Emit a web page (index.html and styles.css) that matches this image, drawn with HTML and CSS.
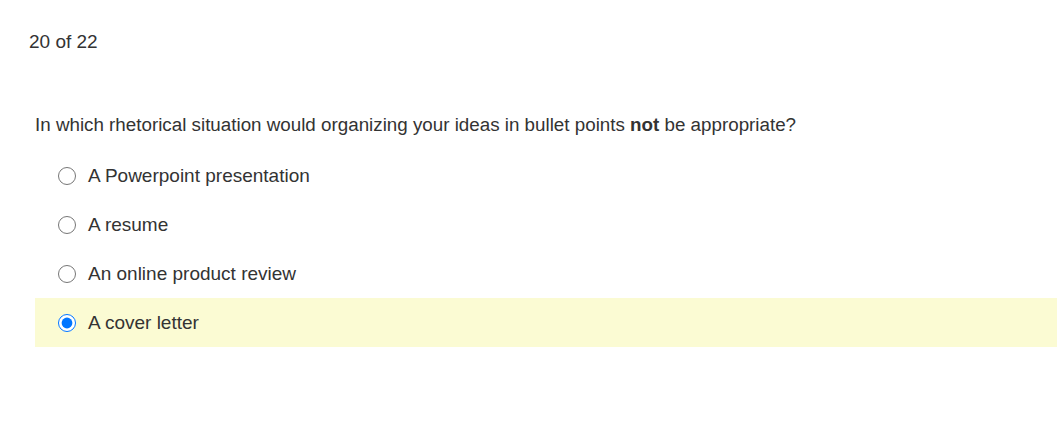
FILE: index.html
```html
<!DOCTYPE html>
<html lang="en">
<head>
    <meta charset="UTF-8">
    <title>Question 20 of 22</title>
    <link rel="stylesheet" href="styles.css">
</head>
<body>
    <div class="counter">20 of 22</div>

    <div class="question">
        <p class="prompt">In which rhetorical situation would organizing your ideas in bullet points <strong>not</strong> be appropriate?</p>

        <div class="options">
            <label class="option">
                <input type="radio" name="answer" value="a">
                <span>A Powerpoint presentation</span>
            </label>
            <label class="option">
                <input type="radio" name="answer" value="b">
                <span>A resume</span>
            </label>
            <label class="option">
                <input type="radio" name="answer" value="c">
                <span>An online product review</span>
            </label>
            <label class="option selected">
                <input type="radio" name="answer" value="d" checked>
                <span>A cover letter</span>
            </label>
        </div>
    </div>
</body>
</html>
```

FILE: styles.css
```css
body {
    font-family: "Liberation Sans", Arial, sans-serif;
    color: #333;
    background: #fff;
    margin: 0;
}

.counter {
    font-size: 19px;
    padding: 32px 0 0 29px;
    line-height: 20px;
}

.question {
    margin: 62px 0 0 35px;
}

.prompt {
    font-size: 18.8px;
    line-height: 22px;
    margin: 0 0 15px 0;
}

.options {
    display: flex;
    flex-direction: column;
}

.option {
    display: flex;
    align-items: center;
    height: 49px;
    padding-left: 23px;
    font-size: 19px;
}

.option input[type="radio"] {
    width: 18px;
    height: 18px;
    margin: 0 12px 0 0;
}

.option.selected {
    background: #fbfbd3;
}
```
